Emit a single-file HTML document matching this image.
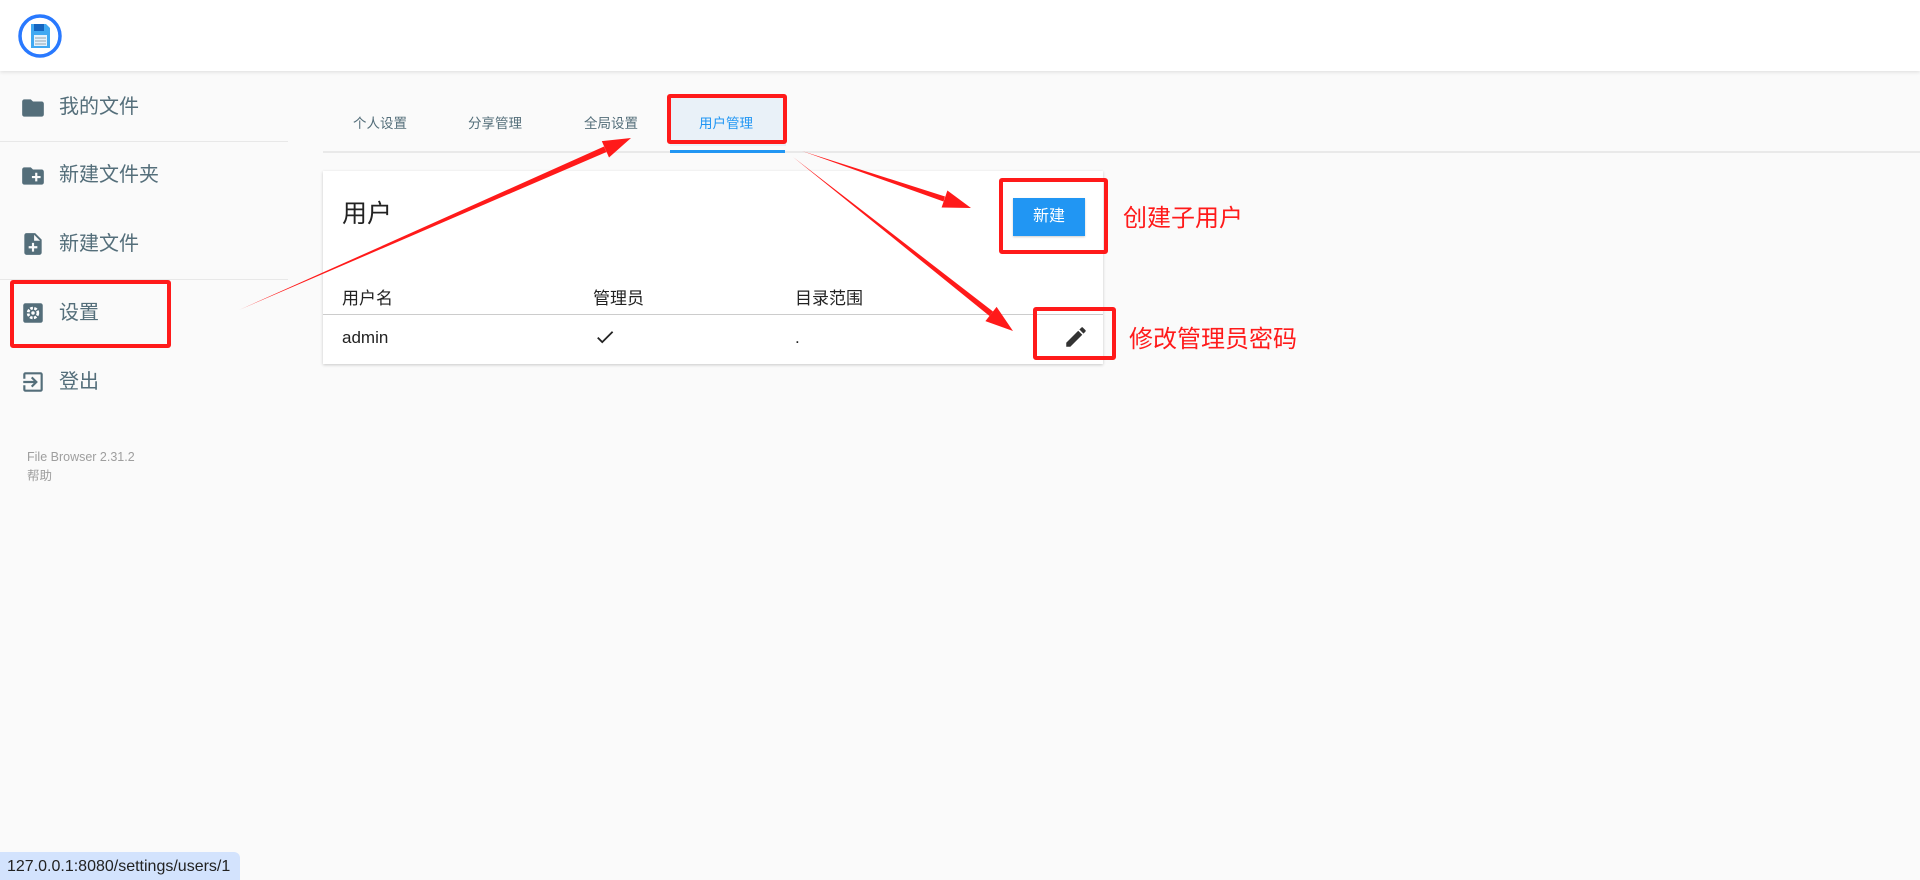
<!DOCTYPE html>
<html><head><meta charset="utf-8"><style>
*{margin:0;padding:0;box-sizing:border-box}
body{width:1920px;height:880px;overflow:hidden;background:#fafafa;font-family:"Liberation Sans","Noto Sans CJK SC",sans-serif;position:relative;color:#333}
.abs{position:absolute}
header{position:absolute;left:0;top:0;width:1920px;height:71px;background:#fff;box-shadow:0 1px 4px rgba(0,0,0,.12)}
.nav{position:absolute;left:59px;font-size:20px;color:#546e7a;line-height:24px}
.ico{position:absolute;left:20px;width:26px;height:26px}
.div{position:absolute;left:0;width:288px;height:1px;background:#e8e8e8}
.tab{position:absolute;top:112px;font-size:13.5px;color:#546e7a}
.card{position:absolute;left:323px;top:171px;width:780px;height:193px;background:#fff;box-shadow:0 1px 3px rgba(0,0,0,.2)}
.rb{position:absolute;border:4px solid #ff1a1a;border-radius:3px}
.red{position:absolute;color:#ff1a1a;font-size:24px}
</style></head><body>
<header>
<svg class="abs" style="left:17px;top:13px" width="46" height="46" viewBox="0 0 46 46"><circle cx="23" cy="23" r="20" fill="#fff" stroke="#2979ff" stroke-width="3.5"/><path d="M14 11h15l4 4v20H14z" fill="#40a9f2"/><rect x="17" y="11" width="10" height="7" fill="#1565c0"/><rect x="17" y="22" width="13" height="11" fill="#e3f2fd"/><path d="M18 25h11M18 28h11M18 31h11" stroke="#90a4ae"/></svg>
</header>
<svg class="ico" style="top:95px" viewBox="0 0 24 24"><path d="M10 4H4c-1.1 0-2 .9-2 2v12c0 1.1.9 2 2 2h16c1.1 0 2-.9 2-2V8c0-1.1-.9-2-2-2h-8l-2-2z" fill="#546e7a"/></svg>
<div class="nav" style="top:95px">我的文件</div>
<div class="div" style="top:141px"></div>
<svg class="ico" style="top:163px" viewBox="0 0 24 24"><path d="M20 6h-8l-2-2H4c-1.1 0-2 .9-2 2v12c0 1.1.9 2 2 2h16c1.1 0 2-.9 2-2V8c0-1.1-.9-2-2-2zm-1 8h-3v3h-2v-3h-3v-2h3V9h2v3h3v2z" fill="#546e7a"/></svg>
<div class="nav" style="top:163px">新建文件夹</div>
<svg class="ico" style="top:231px" viewBox="0 0 24 24"><path d="M14 2H6c-1.1 0-2 .9-2 2v16c0 1.1.9 2 2 2h12c1.1 0 2-.9 2-2V8l-6-6zm2 14h-3v3h-2v-3H8v-2h3v-3h2v3h3v2zm-3-7V3.5L18.5 9H13z" fill="#546e7a"/></svg>
<div class="nav" style="top:232px">新建文件</div>
<div class="div" style="top:279px"></div>
<svg class="ico" style="top:300px" viewBox="0 0 24 24"><rect x="3" y="3" width="18" height="18" rx="2" fill="#546e7a"/><circle cx="12" cy="12" r="4.5" fill="none" stroke="#fff" stroke-width="2.5" stroke-dasharray="2.5 1.2"/><circle cx="12" cy="12" r="1.6" fill="#fff"/></svg>
<div class="nav" style="top:301px">设置</div>
<svg class="ico" style="top:369px" viewBox="0 0 24 24"><path d="M10.09 15.59L11.5 17l5-5-5-5-1.41 1.41L12.67 11H3v2h9.67l-2.58 2.59zM19 3H5c-1.11 0-2 .9-2 2v4h2V5h14v14H5v-4H3v4c0 1.1.89 2 2 2h14c1.1 0 2-.9 2-2V5c0-1.1-.9-2-2-2z" fill="#546e7a"/></svg>
<div class="nav" style="top:370px">登出</div>
<div class="abs" style="left:27px;top:448px;font-size:12.5px;color:#9e9e9e;line-height:19px">File Browser 2.31.2<br>帮助</div>

<div class="abs" style="left:670px;top:96px;width:116px;height:50px;background:#e9f1f8"></div>
<div class="tab" style="left:353px">个人设置</div>
<div class="tab" style="left:468px">分享管理</div>
<div class="tab" style="left:584px">全局设置</div>
<div class="tab" style="left:699px;color:#2196f3">用户管理</div>
<div class="abs" style="left:323px;top:151px;width:1597px;height:2px;background:#e9e9e9"></div>
<div class="abs" style="left:670px;top:150px;width:115px;height:3px;background:#2196f3"></div>

<div class="card">
<div class="abs" style="left:19px;top:23px;font-size:25px;color:#222">用户</div>
<div class="abs" style="left:690px;top:27px;width:72px;height:38px;background:#2196f3;color:#fff;font-size:16px;text-align:center;line-height:38px;box-shadow:0 1px 2px rgba(0,0,0,.2)">新建</div>
<div class="abs" style="left:19px;top:113px;font-size:17px;color:#222">用户名</div>
<div class="abs" style="left:270px;top:113px;font-size:17px;color:#222">管理员</div>
<div class="abs" style="left:472px;top:113px;font-size:17px;color:#222">目录范围</div>
<div class="abs" style="left:0;top:143px;width:780px;height:1px;background:#ccc"></div>
<div class="abs" style="left:19px;top:157px;font-size:17px;color:#222">admin</div>
<svg class="abs" style="left:271px;top:155px" width="22" height="22" viewBox="0 0 24 24"><path d="M9 16.2L4.8 12l-1.4 1.4L9 19 21 7l-1.4-1.4z" fill="#222"/></svg>
<div class="abs" style="left:472px;top:157px;font-size:17px;color:#222">.</div>
<svg class="abs" style="left:740px;top:153px" width="26" height="26" viewBox="0 0 24 24"><path d="M3 17.25V21h3.75L17.81 9.94l-3.75-3.75L3 17.25zM20.71 7.04a1 1 0 000-1.41l-2.34-2.34a1 1 0 00-1.41 0l-1.83 1.83 3.75 3.75 1.83-1.83z" fill="#333"/></svg>
</div>

<div class="rb" style="left:667px;top:94px;width:120px;height:50px"></div>
<div class="rb" style="left:10px;top:280px;width:161px;height:68px"></div>
<div class="rb" style="left:999px;top:178px;width:109px;height:76px"></div>
<div class="rb" style="left:1033px;top:307px;width:83px;height:53px"></div>
<div class="red" style="left:1123px;top:198px">创建子用户</div>
<div class="red" style="left:1129px;top:319px">修改管理员密码</div>

<svg class="abs" style="left:0;top:0" width="1920" height="880">
<polygon points="239,310 604,146.5 606.5,152" fill="#ff1a1a"/>
<polygon points="631,138 609,157.5 601.8,141.1" fill="#ff1a1a"/>
<polygon points="802,151 945,196.5 943.5,201.5" fill="#ff1a1a"/>
<polygon points="971,208 941.6,207.5 947.4,190.5" fill="#ff1a1a"/>
<polygon points="793,157 993,311.5 989.5,316" fill="#ff1a1a"/>
<polygon points="1013,331 985.4,321.1 996.6,306.9" fill="#ff1a1a"/>
</svg>

<div class="abs" style="left:0;top:852px;width:240px;height:28px;background:#d3e3fd;border-top-right-radius:6px;font-size:16px;color:#222;padding:6px 0 0 7px">127.0.0.1:8080/settings/users/1</div>
</body></html>
